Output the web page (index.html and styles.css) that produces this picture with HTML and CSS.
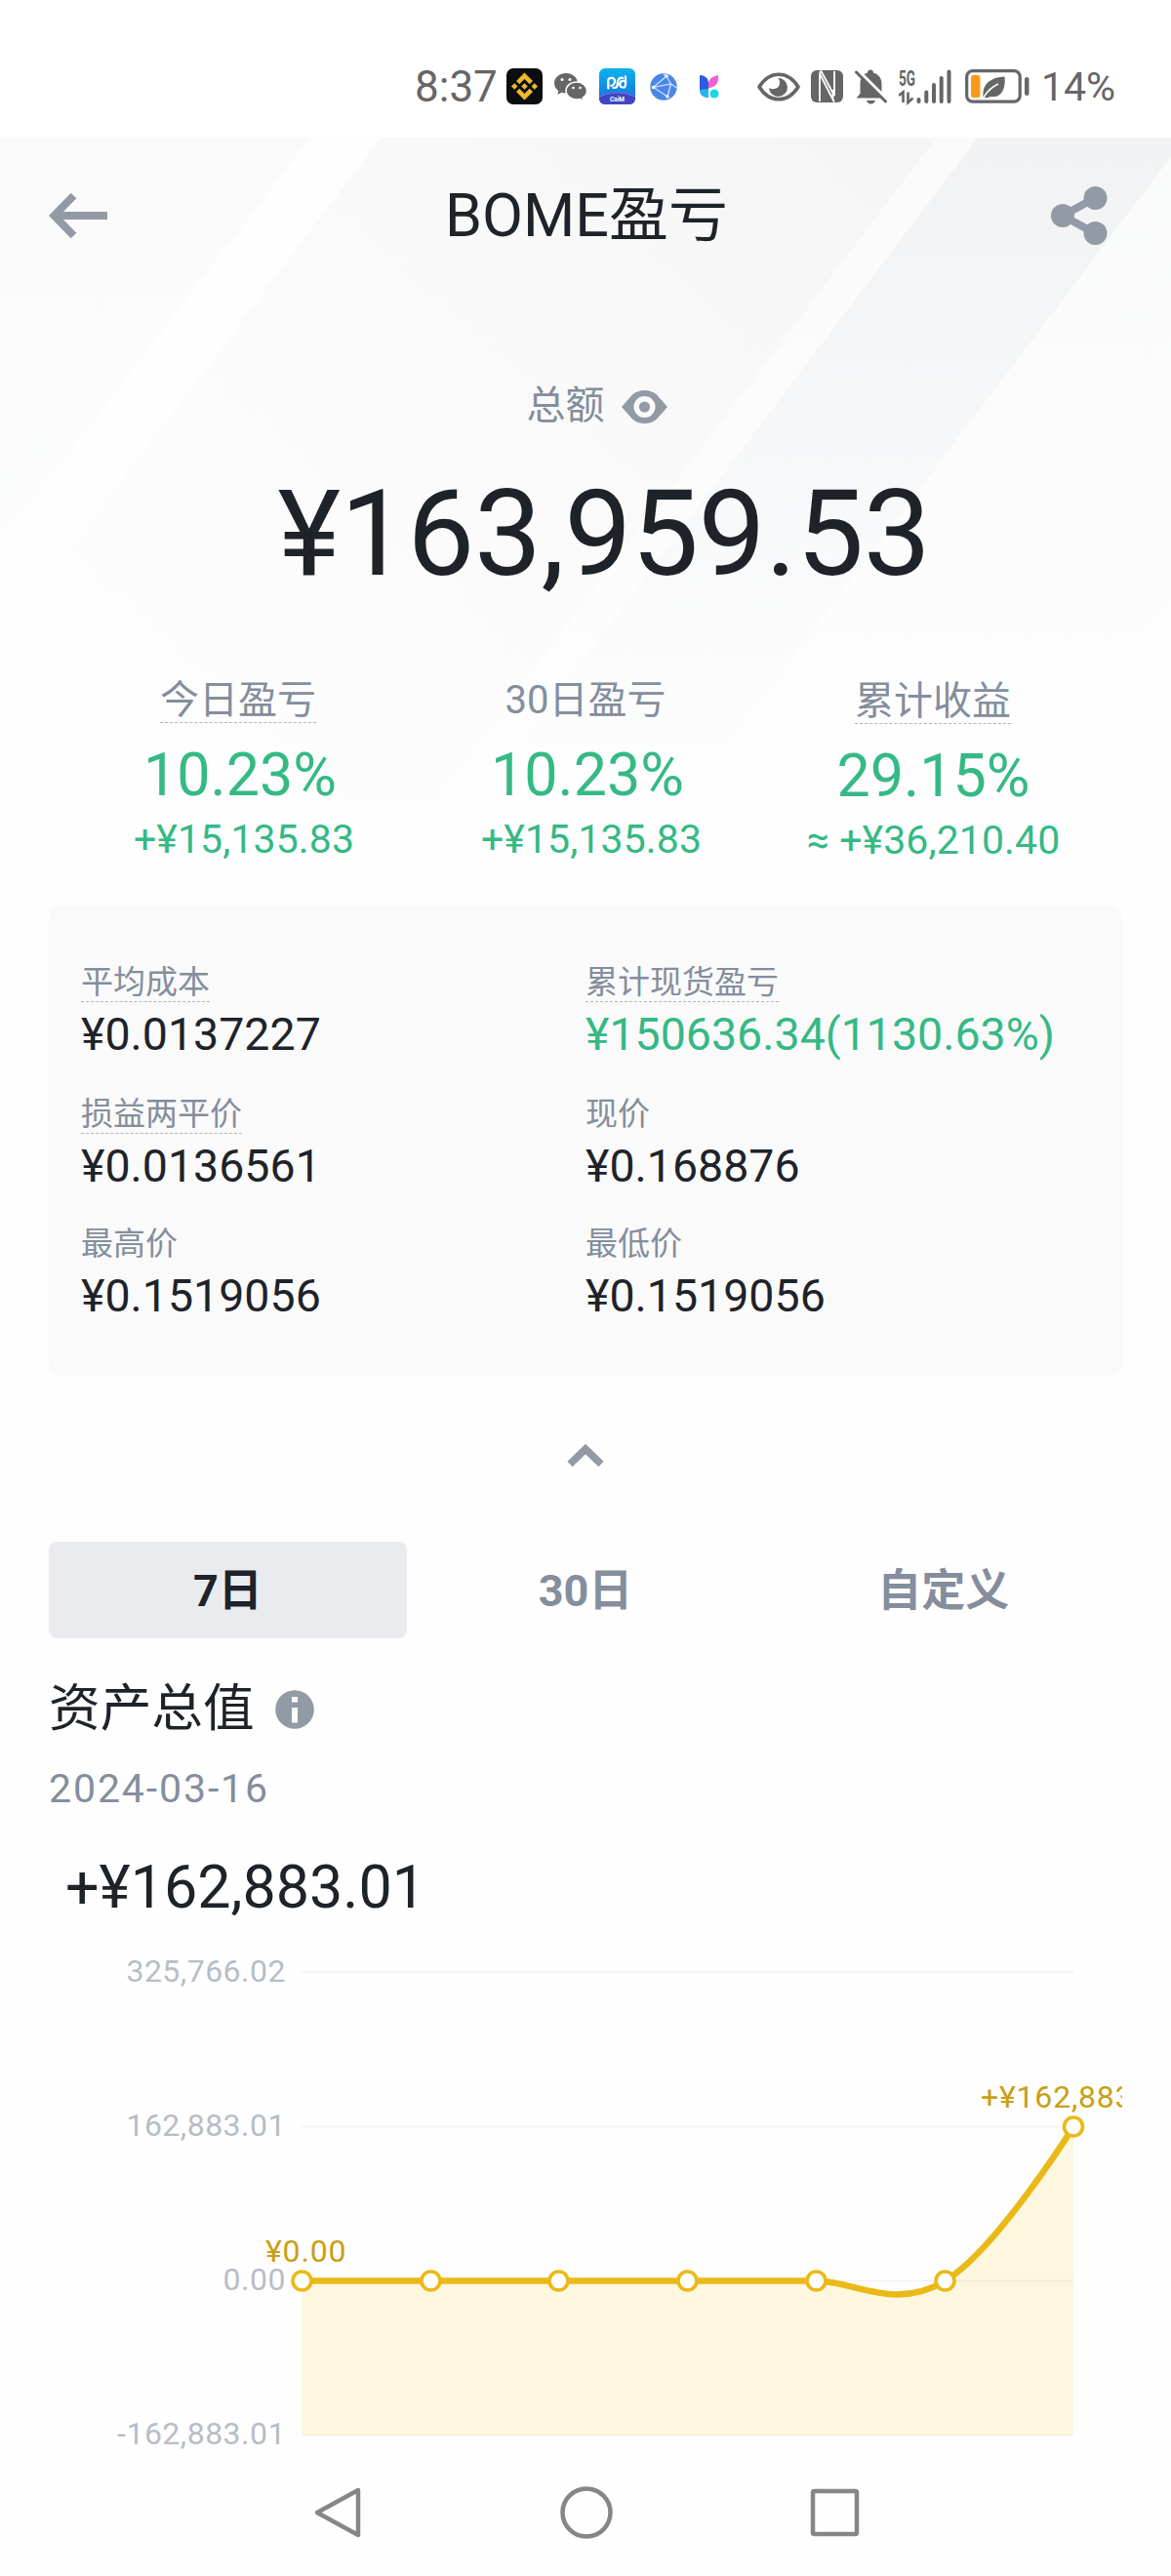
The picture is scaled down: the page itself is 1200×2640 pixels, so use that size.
FILE: index.html
```html
<!DOCTYPE html>
<html lang="zh-CN">
<head>
  <meta charset="UTF-8" />
  <meta name="viewport" content="width=device-width, initial-scale=1.0"/>
  <title>BOME盈亏</title>
  <link rel="stylesheet" href="styles.css">
</head>
<body>
  <div class="statusbar">
    <span class="time">8:37</span>
    <svg class="app-binance" width="37" height="37" viewBox="0 0 37 37">
      <rect width="37" height="37" rx="7" fill="#0b0e11"/>
      <g fill="#f0b92b">
        <path d="M18.500 4.500l8.500 8.500-3.300 3.300-5.200-5.200-5.200 5.200-3.300-3.300z"/>
        <path d="M18.500 32.500l8.500-8.500-3.300-3.300-5.200 5.200-5.200-5.200-3.300 3.300z"/>
        <path d="M18.500 15.200l3.300 3.300-3.300 3.300-3.300-3.300z"/>
        <path d="M8.200 15.200l3.300 3.300-3.300 3.300-3.300-3.300z"/>
        <path d="M28.800 15.200l3.300 3.300-3.300 3.300-3.300-3.300z"/>
      </g>
    </svg>
    <svg class="app-wechat" width="34" height="30" viewBox="0 0 34 30">
      <path d="M12 1C5.500 1 0 5.500 0 11.300c0 3.200 1.700 6 4.300 7.900L3.300 23l4.300-2.200c1.400.4 2.900.6 4.400.6C18.500 21.400 24 17 24 11.300S18.500 1 12 1z" fill="#666"/>
      <path d="M22.800 10C16.800 10 12 14 12 19s4.800 9 10.800 9c1.300 0 2.600-.2 3.700-.5l3.700 2-.9-3.300c2.600-1.700 4.200-4.300 4.200-7.200 0-5-4.700-9-10.700-9z" fill="#666" stroke="#fff" stroke-width="1.500"/>
      <g fill="#fff"><circle cx="8" cy="7.500" r="1.500"/><circle cx="16" cy="7.500" r="1.500"/><circle cx="19.500" cy="16" r="1.300"/><circle cx="26.500" cy="16" r="1.300"/></g>
    </svg>
    <svg class="app-blue" width="37" height="37" viewBox="0 0 37 37">
      <defs>
        <linearGradient id="blue" x1="0" y1="0" x2="0" y2="1">
          <stop offset="0" stop-color="#0bb4ea"/><stop offset="1" stop-color="#1a68e0"/>
        </linearGradient>
        <clipPath id="appclip"><rect width="37" height="37" rx="6"/></clipPath>
      </defs>
      <g clip-path="url(#appclip)">
        <rect width="37" height="37" fill="url(#blue)"/>
        <ellipse cx="18.500" cy="37" rx="23" ry="12" fill="#4145c4"/>
        <path d="M0 29Q18 21 37 29" fill="none" stroke="#9a6bd0" stroke-width=".8"/>
      </g>
      <path d="M9.300 20.500V12.500C9.300 9 16 9 16 13c0 3-2 4.800-3.800 4.800M14.500 19.800c5 .8 4-3 4.500-6 .5-3.500 3-4.500 5-4M27 8.500V17c0 1.500-.8 2.500-1.500 2.800M25 13c-4.500-.5-5 6-1.500 6.300" fill="none" stroke="#fff" stroke-width="2.300" stroke-linecap="round"/>
      <text x="18.500" y="34" class="app-text">CaiM</text>
    </svg>
    <svg class="app-globe" width="28" height="28" viewBox="0 0 28 28">
      <circle cx="14" cy="14" r="13.700" fill="#4a86e8"/>
      <path d="M17 3L3.500 14.500 18 24M17 3l4.500 8L18 24M3.500 14.500l18-3.500 6 4M17 3l-3-2" fill="none" stroke="#d5e3fb" stroke-width="1.200"/>
      <g fill="#fff"><circle cx="17" cy="3" r="1.700"/><circle cx="3.500" cy="14.500" r="1.700"/><circle cx="18" cy="24" r="1.700"/></g>
    </svg>
    <svg class="app-k" width="20" height="24" viewBox="0 0 20 24">
      <path d="M0 0c5 0 9 3 9 8v15C4 23 0 20 0 15z" fill="#2f5be0"/>
      <path d="M0 15l9-1v9C4 23 0 20 0 15z" fill="#26b6ef"/>
      <path d="M19 0c1 8-3 13-10 13V8c1-5 5-7 10-8z" fill="#f060d0"/>
      <circle cx="15" cy="19" r="4.500" fill="#19d7e4"/>
    </svg>

    <svg class="st-eye" width="44" height="30" viewBox="0 0 44 30">
      <path d="M2 15C7 7 14 2.200 22 2.200S37 7 42 15C37 23 30 27.800 22 27.800S7 23 2 15z" fill="none" stroke="#666" stroke-width="3.600" stroke-linejoin="round"/>
      <path d="M21 6a9.500 9.500 0 1 1-9 10c2 2 9 1.500 10.500-2.500C23.800 10 22.500 7 21 6z" fill="#666"/>
    </svg>
    <svg class="st-nfc" width="33" height="33" viewBox="0 0 33 33">
      <rect width="33" height="33" rx="6" fill="#666"/>
      <path d="M9 32V3.500L22.500 30V20M10.500 1v0L24 26V1" fill="none" stroke="#fff" stroke-width="1.800"/>
      <path d="M9 3.500l1.500-3M22.500 30l1.500 2.500" fill="none" stroke="#fff" stroke-width="1.800"/>
    </svg>
    <svg class="st-bell" width="33" height="36" viewBox="0 0 33 36">
      <path d="M13 3.500c0-4 6-4 6 0 5 1.500 8.500 5.500 8.500 11V25l4 4.500H1.500L5.500 25V14.500C5.500 9 8.500 5 13 3.500z" fill="#666"/>
      <path d="M12 32h9c-.8 4.500-8.200 4.500-9 0z" fill="#666"/>
      <path d="M3 1l31 31" stroke="#fff" stroke-width="3.500"/>
      <path d="M1.500 3l30 30" stroke="#666" stroke-width="3" stroke-linecap="round"/>
    </svg>
    <svg class="st-signal" width="54" height="43" viewBox="0 -4 54 43">
      <text x="0" y="16.500" class="net-text" textLength="17" lengthAdjust="spacingAndGlyphs">5G</text>
      <path d="M0 27l4.500-3.500V34M9.500 23.500V34l5-4.500" fill="none" stroke="#666" stroke-width="2.600"/>
      <path d="M20.500 31v2M28.300 23.500V33M36 16v17M43.700 9v24M51.500 2.500V33" stroke="#666" stroke-width="4" stroke-linecap="round"/>
    </svg>
    <svg class="st-battery" width="67" height="35" viewBox="0 0 67 35">
      <rect x="1.700" y="1.700" width="54.500" height="31.500" rx="6" fill="none" stroke="#666" stroke-width="3.200"/>
      <rect x="6" y="6" width="9.500" height="23" rx="2.500" fill="#fd9a1c"/>
      <path d="M40.500 7.500C42 22 36 29.500 26 28l-4 1.500c-1-.5-3.500 0-3.500-1.500-1-13 7-19.500 22-20.500z" fill="#666"/>
      <path d="M19 29C22 23 27 18.500 34 15" fill="none" stroke="#fff" stroke-width="1.600"/>
      <rect x="61" y="8" width="4.500" height="19" rx="2.200" fill="#666"/>
    </svg>
    <span class="percent">14%</span>
  </div>

  <div class="page">
    <svg class="bg" width="1200" height="680" viewBox="0 0 1200 680" preserveAspectRatio="none">
      <defs>
        <linearGradient id="left" x1="0" y1="0" x2="0" y2="1">
          <stop offset="0" stop-color="#fafafa"/><stop offset="1" stop-color="#fcfdfd"/>
        </linearGradient>
        <linearGradient id="mid" x1="1" y1="0" x2="0" y2=".8">
          <stop offset="0" stop-color="#f5f5f6"/><stop offset=".5" stop-color="#fafafb"/><stop offset="1" stop-color="#fefefe"/>
        </linearGradient>
        <linearGradient id="right" x1="0" y1="0" x2="0" y2="1">
          <stop offset="0" stop-color="#f1f2f4"/><stop offset=".6" stop-color="#f8f9fa"/><stop offset="1" stop-color="#fefefe"/>
        </linearGradient>
        <linearGradient id="line" x1="0" y1="0" x2="0" y2="1">
          <stop offset="0" stop-color="#fafafa"/><stop offset="1" stop-color="#fefefe"/>
        </linearGradient>
        <linearGradient id="corner" x1="0" y1="0" x2="0" y2="1">
          <stop offset="0" stop-color="#f9fafa"/><stop offset="1" stop-color="#fefefe"/>
        </linearGradient>
      </defs>
      <path d="M0 0H318L0 416z" fill="url(#left)"/>
      <path d="M318 0H390L0 515V416z" fill="#fefefe"/>
      <path d="M390 0H960L445 680H0V515z" fill="url(#mid)"/>
      <path d="M960 0H1002L487 680H445z" fill="url(#line)"/>
      <path d="M1002 0H1200V20L700 680H487z" fill="url(#right)"/>
      <path d="M1200 20V475L1045 680H700z" fill="url(#corner)"/>
    </svg>

    <header class="header">
      <svg width="60" height="48" viewBox="0 0 60 48">
        <path d="M25.500 3.500L5.500 24l20 20.500M6 24H60" fill="none" stroke="#929aa5" stroke-width="8"/>
      </svg>
      <h1>BOME盈亏</h1>
      <svg width="58" height="60" viewBox="0 0 58 60">
        <path d="M45 12L12 30l33 18" fill="none" stroke="#929aa5" stroke-width="8"/>
        <g fill="#929aa5"><circle cx="45.500" cy="12" r="12"/><circle cx="12" cy="30" r="12"/><circle cx="45.500" cy="48" r="12"/></g>
      </svg>
    </header>

    <div class="total-label">
      <span>总额</span>
      <svg width="47" height="34" viewBox="0 0 47 34">
        <path d="M0 17L11 4.500C18-1.500 29-1.500 36 4.500L47 17 36 29.500c-7 6-18 6-25 0z" fill="#929aa5"/>
        <circle cx="23.500" cy="17" r="11" fill="#fbfbfc"/>
        <circle cx="23.500" cy="17" r="5.600" fill="#929aa5"/>
      </svg>
    </div>
    <div class="total">¥163,959.53</div>

    <div class="stats">
      <div class="stat">
        <span class="stat-label tip">今日盈亏</span>
        <span class="stat-rate">10.23%</span>
        <span class="stat-money">+¥15,135.83</span>
      </div>
      <div class="stat">
        <span class="stat-label">30日盈亏</span>
        <span class="stat-rate">10.23%</span>
        <span class="stat-money">+¥15,135.83</span>
      </div>
      <div class="stat stat-sum">
        <span class="stat-label tip">累计收益</span>
        <span class="stat-rate">29.15%</span>
        <span class="stat-money">≈ +¥36,210.40</span>
      </div>
    </div>

    <div class="panel">
      <div class="cell"><span class="cell-label tip">平均成本</span><span class="cell-value">¥0.0137227</span></div>
      <div class="cell"><span class="cell-label tip">累计现货盈亏</span><span class="cell-value green">¥150636.34(1130.63%)</span></div>
      <div class="cell"><span class="cell-label tip">损益两平价</span><span class="cell-value">¥0.0136561</span></div>
      <div class="cell"><span class="cell-label">现价</span><span class="cell-value">¥0.168876</span></div>
      <div class="cell"><span class="cell-label">最高价</span><span class="cell-value">¥0.1519056</span></div>
      <div class="cell"><span class="cell-label">最低价</span><span class="cell-value">¥0.1519056</span></div>
    </div>

    <div class="collapse">
      <svg width="38" height="24" viewBox="0 0 38 24">
        <path d="M3 20.500L19 5l16 15.500" fill="none" stroke="#929aa5" stroke-width="7.500"/>
      </svg>
    </div>

    <div class="tabs">
      <div class="tab active">7日</div>
      <div class="tab">30日</div>
      <div class="tab">自定义</div>
    </div>

    <div class="section-title">
      <h2>资产总值</h2>
      <svg width="40" height="40" viewBox="0 0 40 40">
        <circle cx="20" cy="20" r="19.800" fill="#929aa5"/>
        <path d="M17 7h6v5.500h-6zM17 18h6v15.500h-6z" fill="#fff"/>
      </svg>
    </div>
    <div class="date">2024-03-16</div>
    <div class="amount">+¥162,883.01</div>

    <svg class="chart" width="1100" height="535" viewBox="0 0 1100 535">
      <path class="grid" d="M259.500 31H1050M259.500 189.500H1050M259.500 347.500H1050M259.500 505.500H1050"/>
      <path class="area" d="M259.500 347.500H786.500C826 347.500 866 379 918.500 347.500C971 316 1050 189.500 1050 189.500V505.500H259.500z"/>
      <path class="line" d="M259.500 347.500H786.500C826 347.500 866 379 918.500 347.500C971 316 1050 189.500 1050 189.500"/>
      <g class="dots">
        <circle cx="259.500" cy="347.500" r="9.500"/>
        <circle cx="391.500" cy="347.500" r="9.500"/>
        <circle cx="522.500" cy="347.500" r="9.500"/>
        <circle cx="654.500" cy="347.500" r="9.500"/>
        <circle cx="786.500" cy="347.500" r="9.500"/>
        <circle cx="918.500" cy="347.500" r="9.500"/>
        <circle cx="1050" cy="189.500" r="9.500"/>
      </g>
      <g class="axis">
        <text x="243" y="41">325,766.02</text>
        <text x="243" y="199">162,883.01</text>
        <text x="243" y="357">0.00</text>
        <text x="243" y="515">-162,883.01</text>
      </g>
      <text class="point-label" x="222" y="328">¥0.00</text>
      <text class="point-label" x="955" y="170">+¥162,883.01</text>
    </svg>
  </div>

  <nav class="navbar">
    <svg width="56" height="56" viewBox="0 0 56 56"><path d="M50 5L8 28l42 23z" /></svg>
    <svg width="56" height="56" viewBox="0 0 56 56"><circle cx="28" cy="28" r="24.500"/></svg>
    <svg width="56" height="56" viewBox="0 0 56 56"><rect x="5" y="6" width="45" height="44" rx="1.500"/></svg>
  </nav>
</body>
</html>
```
FILE: styles.css
```css
* {
  box-sizing: border-box;
}
body {
  margin: 0;
  width: 1200px;
  height: 2640px;
  overflow: hidden;
  background: #fefefe;
  color: #1e2329;
  font-family: Roboto, "Noto Sans CJK SC", sans-serif;
}
svg {
  display: block;
  flex: none;
}
h1, h2 {
  margin: 0;
  font-weight: 400;
}

/* status bar */
.statusbar {
  display: flex;
  align-items: center;
  height: 141px;
  padding: 36px 0 0 425px;
  background: #fff;
  color: #666;
  font-size: 44px;
  line-height: 60px;
}
.time {
  width: 94px;
}
.app-wechat { margin-left: 12px; }
.app-blue { margin-left: 12px; }
.app-globe { margin-left: 15px; }
.app-k { margin-left: 23px; }
.st-eye { margin-left: 39px; }
.st-nfc { margin-left: 11px; }
.st-bell { margin-left: 12px; }
.st-signal { margin-left: 12px; }
.st-battery { margin-left: 14px; }
.percent {
  margin-left: 11px;
  font-size: 41px;
}
.app-text {
  fill: #fff;
  font-size: 6.5px;
  font-weight: 700;
  text-anchor: middle;
}
.net-text {
  fill: #666;
  font-size: 22px;
  font-weight: 700;
}

/* page */
.page {
  position: relative;
  height: 2389px;
  padding: 0 50px;
}
.bg {
  position: absolute;
  left: 0;
  top: 0;
  z-index: -1;
}
.header {
  display: flex;
  justify-content: space-between;
  align-items: center;
  height: 160px;
  padding-right: 15px;
}
.header h1 {
  margin-left: 15px;
  font-size: 61px;
  line-height: 80px;
}
.total-label {
  display: flex;
  justify-content: center;
  align-items: center;
  gap: 17px;
  height: 60px;
  margin-top: 86px;
  padding-left: 23px;
  color: #848e9c;
  font-size: 40px;
  line-height: 40px;
}
.total-label span {
  margin-top: -2px;
}
.total {
  margin-top: 40px;
  padding-left: 38px;
  text-align: center;
  font-size: 123px;
  line-height: 120px;
  letter-spacing: -.5px;
}

/* stats */
.stats {
  display: grid;
  grid-template-columns: 356px 356px 356px;
  height: 230px;
  margin-top: 91px;
  padding-left: 16px;
}
.stat {
  display: flex;
  flex-direction: column;
  align-items: center;
}
.stat-sum {
  padding-top: 1px;
}
.stat-label {
  height: 43px;
  margin-bottom: 23px;
  color: #848e9c;
  font-size: 40px;
  line-height: 40px;
}
.tip {
  border-bottom: 1.5px dashed #b0b6bf;
}
.stat-rate {
  margin-bottom: 16px;
  padding-left: 4px;
  color: #35b985;
  font-size: 61px;
  line-height: 60px;
}
.stat-money {
  padding-left: 12px;
  color: #35b985;
  font-size: 41px;
  line-height: 41px;
  letter-spacing: .1px;
}
.stat-sum .stat-rate,
.stat-sum .stat-money {
  padding-left: 1px;
}

/* detail panel */
.panel {
  display: grid;
  grid-template-columns: 517px 1fr;
  grid-template-rows: 135px 133px 133px;
  height: 482px;
  padding: 62px 0 0 33px;
  border-radius: 12px;
  background: #fafafa;
}
.cell {
  display: flex;
  flex-direction: column;
  align-items: flex-start;
}
.cell-label {
  height: 37px;
  margin-bottom: 8px;
  color: #848e9c;
  font-size: 33px;
  line-height: 34px;
}
.cell-value {
  font-size: 46.5px;
  line-height: 50px;
}
.green {
  color: #35b985;
}
.collapse {
  display: flex;
  justify-content: center;
  height: 170px;
  padding-top: 70px;
}

/* tabs */
.tabs {
  display: grid;
  grid-template-columns: repeat(3, 1fr);
  height: 99px;
}
.tab {
  padding-top: 3px;
  border-radius: 8px;
  color: #848e9c;
  text-align: center;
  font-size: 45px;
  font-weight: 700;
  line-height: 96px;
}
.tab.active {
  background: #eaebef;
  color: #1e2329;
}

.section-title {
  display: flex;
  align-items: center;
  gap: 21px;
  height: 60px;
  margin-top: 43px;
}
.section-title h2 {
  margin-top: -2px;
  font-size: 52.7px;
  line-height: 60px;
}
.date {
  margin-top: 31px;
  color: #848e9c;
  font-size: 41px;
  line-height: 40px;
  letter-spacing: 1.9px;
}
.amount {
  margin-top: 51px;
  padding-left: 17px;
  font-size: 61px;
  line-height: 60px;
}

/* chart */
.chart {
  margin-top: 26px;
  overflow: hidden;
}
.grid {
  stroke: #f3f3f4;
  stroke-width: 2;
}
.area {
  fill: #fad648;
  fill-opacity: .17;
}
.line {
  fill: none;
  stroke: #ebb917;
  stroke-width: 6.5;
}
.dots {
  fill: #fff;
  stroke: #ebb917;
  stroke-width: 3.6;
}
.axis {
  fill: #b7bdc6;
  font-size: 32px;
  letter-spacing: .5px;
  text-anchor: end;
}
.point-label {
  fill: #c99f14;
  font-size: 32px;
  letter-spacing: .8px;
}

/* system nav */
.navbar {
  display: flex;
  justify-content: space-between;
  padding: 17px 316px 0 317px;
}
.navbar svg {
  fill: none;
  stroke: #868686;
  stroke-width: 4.5;
  stroke-linejoin: round;
}
```
